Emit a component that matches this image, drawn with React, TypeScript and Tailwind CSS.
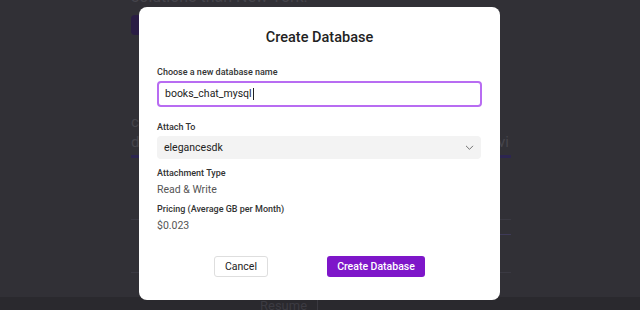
import React from "react";

function Chevron() {
  return (
    <svg width="11" height="11" viewBox="0 0 24 24" fill="none" stroke="#666" strokeWidth="2" strokeLinecap="round" strokeLinejoin="round">
      <path d="M5 9l7 7 7-7" />
    </svg>
  );
}

export default function App() {
  return (
    <div
      className="relative w-[640px] h-[310px] overflow-hidden bg-[#313036]"
      style={{ fontFamily: "Roboto, 'Noto Sans', sans-serif" }}
    >
      {/* dimmed page behind */}
      <div className="ml-[131px] w-[380px] flex flex-col">
        <div className="mt-[-11px] text-[16px] leading-[16px] text-[#45444b] whitespace-nowrap">solutions than New York.</div>
        <div className="mt-[10px] w-[90px] h-[20px] bg-[#2a1d44] rounded-sm" />
        <div className="mt-[77px] text-[15px] leading-[20px] text-[#46454c]">cl</div>
        <div className="flex justify-between text-[15px] leading-[20px] text-[#46454c]">
          <span>de</span>
          <span className="mr-[2px]">vi</span>
        </div>
        <div className="mt-[3px] h-[3px] bg-[#2c2550]" />
        <div className="mt-[61px] h-px bg-[#3a3942]" />
        <div className="mt-[14px] h-px w-full flex justify-end">
          <div className="w-[11px] h-px bg-[#3e3a58]" />
        </div>
        <div className="mt-[37px] h-px bg-[#3a3942]" />
      </div>
      <div className="absolute left-0 right-0 top-[297px] h-[13px] bg-[#2a292e] flex">
        <div className="ml-[245px] w-[73px] border-r border-[#3a3940] text-[13px] leading-[18px] text-[#3c3b42] pl-[15px] whitespace-nowrap">Resume</div>
      </div>

      {/* modal */}
      <div className="absolute left-[139px] top-[7px] w-[361px] h-[293px] rounded-[8px] bg-white flex flex-col px-[18px]">
        <div className="mt-[21px] text-center text-[14.5px] leading-[20px] font-medium text-[#222]">Create Database</div>
        <div className="mt-[17px] text-[9px] leading-[14px] font-medium text-[#333]">Choose a new database name</div>
        <div className="mt-[2px] h-[26px] rounded-[4px] border-2 border-[#b86cf2] flex items-center px-[6px] text-[10.5px] text-[#222]">
          books_chat_mysql<span className="inline-block w-px h-[12px] bg-[#222] ml-px" />
        </div>
        <div className="mt-[13px] text-[9px] leading-[14px] font-medium text-[#333]">Attach To</div>
        <div className="mt-[2px] h-[23px] rounded-[4px] bg-[#f3f3f3] flex items-center justify-between pl-[7px] pr-[6px] text-[10.5px] text-[#222] mr-px">
          <span>elegancesdk</span>
          <Chevron />
        </div>
        <div className="mt-[7px] text-[9px] leading-[14px] font-medium text-[#333]">Attachment Type</div>
        <div className="mt-[3px] text-[10.5px] leading-[14px] text-[#555]">Read &amp; Write</div>
        <div className="mt-[5px] text-[9px] leading-[14px] font-medium text-[#333]">Pricing (Average GB per Month)</div>
        <div className="mt-[3px] text-[10.5px] leading-[14px] text-[#555]">$0.023</div>
        <div className="mt-[23px] flex justify-center gap-[59px]">
          <button className="w-[54px] h-[21px] rounded-[3px] border border-[#dedede] bg-white text-[10.5px] text-[#222]">Cancel</button>
          <button className="w-[98px] h-[21px] rounded-[3px] bg-[#7e16c9] text-[10.5px] text-white font-medium">Create Database</button>
        </div>
      </div>
    </div>
  );
}
